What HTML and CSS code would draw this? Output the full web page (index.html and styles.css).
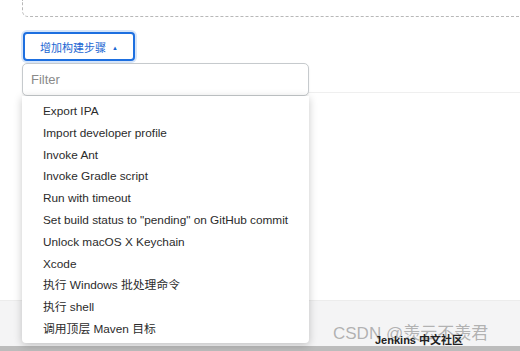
FILE: index.html
```html
<!DOCTYPE html>
<html lang="zh-CN">
<head>
    <meta charset="UTF-8">
    <meta name="viewport" content="width=device-width, initial-scale=1.0">
    <title>增加构建步骤</title>
<link rel="stylesheet" href="styles.css">
</head>
<body>

<div class="page">
    <!-- 上一个构建步骤（只露出底边） -->
    <div class="step-box"></div>

    <div class="add-step">
        <button class="add-btn" type="button">增加构建步骤 <span class="caret">&#9650;</span></button>
        <div class="divider"></div>

        <!-- 下拉菜单 -->
        <div class="popup">
            <input class="filter" type="text" placeholder="Filter">
            <ul class="menu">
                <li>Export IPA</li>
                <li>Import developer profile</li>
                <li>Invoke Ant</li>
                <li>Invoke Gradle script</li>
                <li>Run with timeout</li>
                <li>Set build status to "pending" on GitHub commit</li>
                <li>Unlock macOS X Keychain</li>
                <li>Xcode</li>
                <li>执行 Windows 批处理命令</li>
                <li>执行 shell</li>
                <li>调用顶层 Maven 目标</li>
            </ul>
        </div>
    </div>
</div>

<div class="footer">
    <span class="watermark">CSDN @羡云不羡君</span>
    <span class="footer-link">Jenkins 中文社区</span>
</div>
<div class="window-edge"></div>

</body>
</html>
```

FILE: styles.css
```css
body {
    font-family: 'Liberation Sans', 'Noto Sans CJK SC', sans-serif;
    margin: 0;
    padding: 0;
    color: #333;
    background: #fff;
    overflow: hidden;
}
.page {
    height: 300px;
}
.step-box {
    height: 16px;
    margin-left: 22px;
    border: 1px dashed #b8b8b8;
    border-top: none;
    border-right: none;
    border-bottom-left-radius: 6px;
}
.add-step {
    position: relative;
    z-index: 10;
    margin-top: 15px;
    padding-left: 23px;
}
.add-btn {
    display: block;
    width: 112px;
    height: 29px;
    padding: 0;
    font-family: inherit;
    font-size: 11px;
    color: #1a66d2;
    background: #fff;
    border: 2px solid #1d6fe0;
    border-radius: 4px;
    box-shadow: 0 0 0 2px rgba(29,111,224,0.18);
    text-align: center;
}
.caret {
    font-size: 6px;
    margin-left: 3px;
    vertical-align: 2px;
}
.divider {
    margin-top: 31px;
    border-top: 1px solid #efefef;
}
.popup {
    position: absolute;
    top: 31px;
    left: 22px;
    width: 287px;
}
.filter {
    display: block;
    box-sizing: border-box;
    width: 100%;
    height: 33px;
    margin: 0;
    padding: 0 8px;
    font-family: inherit;
    font-size: 13px;
    color: #333;
    border: 1px solid #c6cacd;
    border-radius: 5px;
    box-shadow: 0 1px 2px rgba(0,0,0,0.08);
}
.filter::placeholder {
    color: #8a8a8a;
}
.menu {
    list-style: none;
    margin: 0;
    padding: 5px 0 2px;
    background: #fff;
    border-radius: 0 0 4px 4px;
    box-shadow: 0 2px 8px rgba(0,0,0,0.22);
}
.menu li {
    height: 21.8px;
    line-height: 21.8px;
    padding-left: 21px;
    font-size: 11.8px;
    color: #2b2b2b;
    white-space: nowrap;
}
.footer {
    position: relative;
    height: 46px;
    background: #f4f4f5;
    border-top: 1px solid #ececec;
    box-sizing: border-box;
}
.footer-link {
    position: absolute;
    left: 375px;
    top: 30px;
    font-size: 11px;
    font-weight: bold;
    color: #222;
}
.watermark {
    position: absolute;
    left: 333px;
    top: 18px;
    font-size: 17px;
    color: rgba(120,120,120,0.55);
    white-space: nowrap;
}
.window-edge {
    height: 5px;
    background: #bcbcbc;
}
```
